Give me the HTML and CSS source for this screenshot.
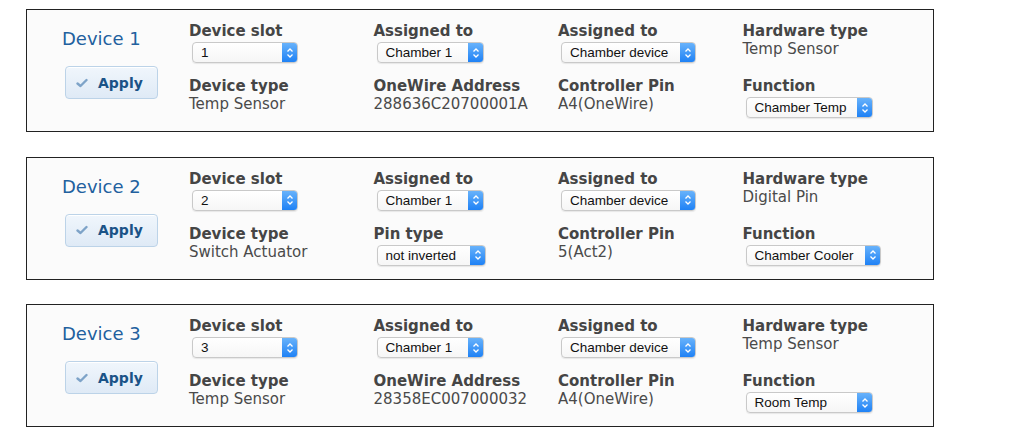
FILE: index.html
```html
<!DOCTYPE html>
<html>
<head>
<meta charset="utf-8">
<link rel="stylesheet" href="styles.css">
</head>
<body>
<div class="page">

  <div class="device">
    <div class="side">
      <div class="title">Device 1</div>
      <button class="apply"><svg class="check" width="12" height="10" viewBox="0 0 12 10"><path d="M1.5 5.5 L4.5 8 L10.5 2" fill="none" stroke="#7ea3c8" stroke-width="2.4" stroke-linecap="round" stroke-linejoin="round"/></svg>Apply</button>
    </div>
    <div class="fields">
      <div class="field"><div class="label">Device slot</div><div class="select w105"><span class="opt">1</span><span class="arrow"><svg width="8" height="12" viewBox="0 0 8 12"><path d="M1.5 4.5 L4 2 L6.5 4.5 M1.5 7.5 L4 10 L6.5 7.5" fill="none" stroke="#fff" stroke-width="1.3"/></svg></span></div></div>
      <div class="field"><div class="label">Assigned to</div><div class="select w106"><span class="opt">Chamber 1</span><span class="arrow"><svg width="8" height="12" viewBox="0 0 8 12"><path d="M1.5 4.5 L4 2 L6.5 4.5 M1.5 7.5 L4 10 L6.5 7.5" fill="none" stroke="#fff" stroke-width="1.3"/></svg></span></div></div>
      <div class="field"><div class="label">Assigned to</div><div class="select w134"><span class="opt">Chamber device</span><span class="arrow"><svg width="8" height="12" viewBox="0 0 8 12"><path d="M1.5 4.5 L4 2 L6.5 4.5 M1.5 7.5 L4 10 L6.5 7.5" fill="none" stroke="#fff" stroke-width="1.3"/></svg></span></div></div>
      <div class="field"><div class="label">Hardware type</div><div class="value">Temp Sensor</div></div>
      <div class="field"><div class="label">Device type</div><div class="value">Temp Sensor</div></div>
      <div class="field"><div class="label">OneWire Address</div><div class="value">288636C20700001A</div></div>
      <div class="field"><div class="label">Controller Pin</div><div class="value">A4(OneWire)</div></div>
      <div class="field"><div class="label">Function</div><div class="select w127"><span class="opt">Chamber Temp</span><span class="arrow"><svg width="8" height="12" viewBox="0 0 8 12"><path d="M1.5 4.5 L4 2 L6.5 4.5 M1.5 7.5 L4 10 L6.5 7.5" fill="none" stroke="#fff" stroke-width="1.3"/></svg></span></div></div>
    </div>
  </div>

  <div class="device">
    <div class="side">
      <div class="title">Device 2</div>
      <button class="apply"><svg class="check" width="12" height="10" viewBox="0 0 12 10"><path d="M1.5 5.5 L4.5 8 L10.5 2" fill="none" stroke="#7ea3c8" stroke-width="2.4" stroke-linecap="round" stroke-linejoin="round"/></svg>Apply</button>
    </div>
    <div class="fields">
      <div class="field"><div class="label">Device slot</div><div class="select w105"><span class="opt">2</span><span class="arrow"><svg width="8" height="12" viewBox="0 0 8 12"><path d="M1.5 4.5 L4 2 L6.5 4.5 M1.5 7.5 L4 10 L6.5 7.5" fill="none" stroke="#fff" stroke-width="1.3"/></svg></span></div></div>
      <div class="field"><div class="label">Assigned to</div><div class="select w106"><span class="opt">Chamber 1</span><span class="arrow"><svg width="8" height="12" viewBox="0 0 8 12"><path d="M1.5 4.5 L4 2 L6.5 4.5 M1.5 7.5 L4 10 L6.5 7.5" fill="none" stroke="#fff" stroke-width="1.3"/></svg></span></div></div>
      <div class="field"><div class="label">Assigned to</div><div class="select w134"><span class="opt">Chamber device</span><span class="arrow"><svg width="8" height="12" viewBox="0 0 8 12"><path d="M1.5 4.5 L4 2 L6.5 4.5 M1.5 7.5 L4 10 L6.5 7.5" fill="none" stroke="#fff" stroke-width="1.3"/></svg></span></div></div>
      <div class="field"><div class="label">Hardware type</div><div class="value">Digital Pin</div></div>
      <div class="field"><div class="label">Device type</div><div class="value">Switch Actuator</div></div>
      <div class="field"><div class="label">Pin type</div><div class="select w108"><span class="opt">not inverted</span><span class="arrow"><svg width="8" height="12" viewBox="0 0 8 12"><path d="M1.5 4.5 L4 2 L6.5 4.5 M1.5 7.5 L4 10 L6.5 7.5" fill="none" stroke="#fff" stroke-width="1.3"/></svg></span></div></div>
      <div class="field"><div class="label">Controller Pin</div><div class="value">5(Act2)</div></div>
      <div class="field"><div class="label">Function</div><div class="select w135"><span class="opt">Chamber Cooler</span><span class="arrow"><svg width="8" height="12" viewBox="0 0 8 12"><path d="M1.5 4.5 L4 2 L6.5 4.5 M1.5 7.5 L4 10 L6.5 7.5" fill="none" stroke="#fff" stroke-width="1.3"/></svg></span></div></div>
    </div>
  </div>

  <div class="device">
    <div class="side">
      <div class="title">Device 3</div>
      <button class="apply"><svg class="check" width="12" height="10" viewBox="0 0 12 10"><path d="M1.5 5.5 L4.5 8 L10.5 2" fill="none" stroke="#7ea3c8" stroke-width="2.4" stroke-linecap="round" stroke-linejoin="round"/></svg>Apply</button>
    </div>
    <div class="fields">
      <div class="field"><div class="label">Device slot</div><div class="select w105"><span class="opt">3</span><span class="arrow"><svg width="8" height="12" viewBox="0 0 8 12"><path d="M1.5 4.5 L4 2 L6.5 4.5 M1.5 7.5 L4 10 L6.5 7.5" fill="none" stroke="#fff" stroke-width="1.3"/></svg></span></div></div>
      <div class="field"><div class="label">Assigned to</div><div class="select w106"><span class="opt">Chamber 1</span><span class="arrow"><svg width="8" height="12" viewBox="0 0 8 12"><path d="M1.5 4.5 L4 2 L6.5 4.5 M1.5 7.5 L4 10 L6.5 7.5" fill="none" stroke="#fff" stroke-width="1.3"/></svg></span></div></div>
      <div class="field"><div class="label">Assigned to</div><div class="select w134"><span class="opt">Chamber device</span><span class="arrow"><svg width="8" height="12" viewBox="0 0 8 12"><path d="M1.5 4.5 L4 2 L6.5 4.5 M1.5 7.5 L4 10 L6.5 7.5" fill="none" stroke="#fff" stroke-width="1.3"/></svg></span></div></div>
      <div class="field"><div class="label">Hardware type</div><div class="value">Temp Sensor</div></div>
      <div class="field"><div class="label">Device type</div><div class="value">Temp Sensor</div></div>
      <div class="field"><div class="label">OneWire Address</div><div class="value">28358EC007000032</div></div>
      <div class="field"><div class="label">Controller Pin</div><div class="value">A4(OneWire)</div></div>
      <div class="field"><div class="label">Function</div><div class="select w127"><span class="opt">Room Temp</span><span class="arrow"><svg width="8" height="12" viewBox="0 0 8 12"><path d="M1.5 4.5 L4 2 L6.5 4.5 M1.5 7.5 L4 10 L6.5 7.5" fill="none" stroke="#fff" stroke-width="1.3"/></svg></span></div></div>
    </div>
  </div>

</div>
</body>
</html>
```

FILE: styles.css
```css
html, body {
  margin: 0;
  padding: 0;
  background: #ffffff;
}

body {
  font-family: "DejaVu Sans", Verdana, sans-serif;
  color: #444444;
}

.page {
  padding: 9px 0 0 26px;
  display: flex;
  flex-direction: column;
  gap: 24.5px;
}

.device {
  box-sizing: border-box;
  width: 908px;
  height: 123px;
  border: 1px solid #222222;
  background: #fbfbfb;
  display: flex;
}

.side {
  width: 127px;
  padding-left: 35px;
  display: flex;
  flex-direction: column;
  align-items: flex-start;
}

.title {
  margin-top: 18px;
  font-size: 18px;
  line-height: 22px;
  color: #22609e;
}

.apply {
  margin: 16px 0 0 3px;
  box-sizing: border-box;
  width: 93px;
  height: 33px;
  padding: 0 0 0 10px;
  border: 1px solid #bcd3e8;
  border-radius: 4px;
  background: linear-gradient(#f0f6fc, #dfeaf6);
  box-shadow: inset 0 1px 0 #ffffff;
  display: flex;
  align-items: center;
  gap: 10px;
  font-family: "DejaVu Sans", Verdana, sans-serif;
  font-weight: bold;
  font-size: 14px;
  color: #1b5387;
  cursor: pointer;
}

.check {
  flex: none;
}

.fields {
  display: grid;
  grid-template-columns: repeat(4, 184.5px);
  align-content: start;
  row-gap: 14px;
  padding-top: 12px;
}

.label {
  font-size: 15px;
  line-height: 18px;
  font-weight: bold;
  color: #454545;
}

.value {
  font-size: 15px;
  line-height: 18px;
  color: #4a4a4a;
}

.select {
  box-sizing: border-box;
  margin: 2px 0 0 3px;
  height: 21px;
  display: flex;
  align-items: stretch;
  border: 1px solid #c9c9c9;
  border-radius: 4px;
  background: linear-gradient(#ffffff, #f6f6f6);
  box-shadow: 0 1px 1px rgba(0, 0, 0, 0.08);
  font-family: "Liberation Sans", Arial, sans-serif;
  font-size: 13.5px;
  color: #111111;
  overflow: hidden;
}

.opt {
  flex: 1;
  padding-left: 8px;
  line-height: 19px;
  white-space: nowrap;
}

.arrow {
  width: 16px;
  flex: none;
  display: flex;
  align-items: center;
  justify-content: center;
  background: linear-gradient(#6cb5fb, #1b7ff5);
  border-radius: 0 3px 3px 0;
  margin: -1px -1px -1px 0;
}

.w105 { width: 106px; }
.w106 { width: 107px; }
.w108 { width: 109px; }
.w127 { width: 127px; }
.w134 { width: 135px; }
.w135 { width: 135px; }
```
